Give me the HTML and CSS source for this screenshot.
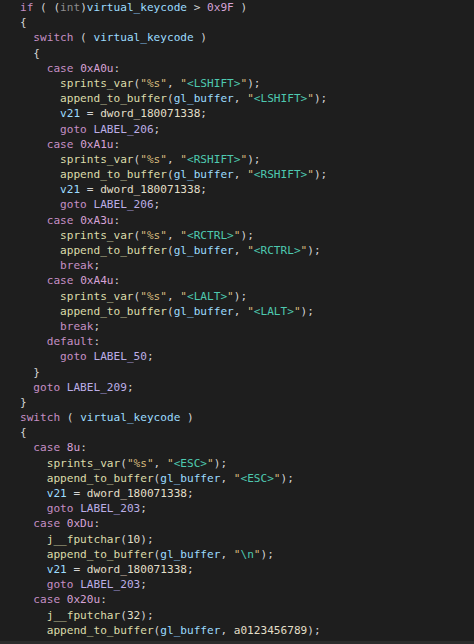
FILE: index.html
```html
<!DOCTYPE html>
<html>
<head>
<meta charset="utf-8">
<link rel="stylesheet" href="styles.css">
</head>
<body>
<div class="code">
<div class="ln"><span class="k">if</span> ( (<span class="t">int</span>)<span class="v">virtual_keycode</span> &gt; <span class="n">0x9F</span> )</div>
<div class="ln">{</div>
<div class="ln">  <span class="k">switch</span> ( <span class="v">virtual_keycode</span> )</div>
<div class="ln">  {</div>
<div class="ln">    <span class="k">case</span> <span class="n">0xA0u</span>:</div>
<div class="ln">      <span class="f">sprints_var</span>(<span class="s">"%s"</span>, <span class="s">"</span><span class="e">&lt;LSHIFT&gt;</span><span class="s">"</span>);</div>
<div class="ln">      <span class="f">append_to_buffer</span>(<span class="v">gl_buffer</span>, <span class="s">"</span><span class="e">&lt;LSHIFT&gt;</span><span class="s">"</span>);</div>
<div class="ln">      <span class="v">v21</span> = <span class="g">dword_180071338</span>;</div>
<div class="ln">      <span class="k">goto</span> <span class="l">LABEL_206</span>;</div>
<div class="ln">    <span class="k">case</span> <span class="n">0xA1u</span>:</div>
<div class="ln">      <span class="f">sprints_var</span>(<span class="s">"%s"</span>, <span class="s">"</span><span class="e">&lt;RSHIFT&gt;</span><span class="s">"</span>);</div>
<div class="ln">      <span class="f">append_to_buffer</span>(<span class="v">gl_buffer</span>, <span class="s">"</span><span class="e">&lt;RSHIFT&gt;</span><span class="s">"</span>);</div>
<div class="ln">      <span class="v">v21</span> = <span class="g">dword_180071338</span>;</div>
<div class="ln">      <span class="k">goto</span> <span class="l">LABEL_206</span>;</div>
<div class="ln">    <span class="k">case</span> <span class="n">0xA3u</span>:</div>
<div class="ln">      <span class="f">sprints_var</span>(<span class="s">"%s"</span>, <span class="s">"</span><span class="e">&lt;RCTRL&gt;</span><span class="s">"</span>);</div>
<div class="ln">      <span class="f">append_to_buffer</span>(<span class="v">gl_buffer</span>, <span class="s">"</span><span class="e">&lt;RCTRL&gt;</span><span class="s">"</span>);</div>
<div class="ln">      <span class="k">break</span>;</div>
<div class="ln">    <span class="k">case</span> <span class="n">0xA4u</span>:</div>
<div class="ln">      <span class="f">sprints_var</span>(<span class="s">"%s"</span>, <span class="s">"</span><span class="e">&lt;LALT&gt;</span><span class="s">"</span>);</div>
<div class="ln">      <span class="f">append_to_buffer</span>(<span class="v">gl_buffer</span>, <span class="s">"</span><span class="e">&lt;LALT&gt;</span><span class="s">"</span>);</div>
<div class="ln">      <span class="k">break</span>;</div>
<div class="ln">    <span class="k">default</span>:</div>
<div class="ln">      <span class="k">goto</span> <span class="l">LABEL_50</span>;</div>
<div class="ln">  }</div>
<div class="ln">  <span class="k">goto</span> <span class="l">LABEL_209</span>;</div>
<div class="ln">}</div>
<div class="ln"><span class="k">switch</span> ( <span class="v">virtual_keycode</span> )</div>
<div class="ln">{</div>
<div class="ln">  <span class="k">case</span> <span class="n">8u</span>:</div>
<div class="ln">    <span class="f">sprints_var</span>(<span class="s">"%s"</span>, <span class="s">"</span><span class="e">&lt;ESC&gt;</span><span class="s">"</span>);</div>
<div class="ln">    <span class="f">append_to_buffer</span>(<span class="v">gl_buffer</span>, <span class="s">"</span><span class="e">&lt;ESC&gt;</span><span class="s">"</span>);</div>
<div class="ln">    <span class="v">v21</span> = <span class="g">dword_180071338</span>;</div>
<div class="ln">    <span class="k">goto</span> <span class="l">LABEL_203</span>;</div>
<div class="ln">  <span class="k">case</span> <span class="n">0xDu</span>:</div>
<div class="ln">    <span class="f">j__fputchar</span>(<span class="g">10</span>);</div>
<div class="ln">    <span class="f">append_to_buffer</span>(<span class="v">gl_buffer</span>, <span class="s">"</span><span class="e">\n</span><span class="s">"</span>);</div>
<div class="ln">    <span class="v">v21</span> = <span class="g">dword_180071338</span>;</div>
<div class="ln">    <span class="k">goto</span> <span class="l">LABEL_203</span>;</div>
<div class="ln">  <span class="k">case</span> <span class="n">0x20u</span>:</div>
<div class="ln">    <span class="f">j__fputchar</span>(<span class="g">32</span>);</div>
<div class="ln">    <span class="f">append_to_buffer</span>(<span class="v">gl_buffer</span>, <span class="g">a0123456789</span>);</div>
</div>
<div class="hscroll"></div>
</body>
</html>
```
FILE: styles.css
```css
html, body {
  margin: 0;
  padding: 0;
  background: #1e1e1e;
  height: 100%;
  overflow: hidden;
}
body {
  display: flex;
  flex-direction: column;
}
.code {
  flex: 1;
  padding: 0 0 0 20px;
  font-family: "DejaVu Sans Mono", "Liberation Mono", monospace;
  font-size: 11.1px;
  line-height: 15.2px;
  color: #d4d4d4;
}
.ln {
  white-space: pre;
  height: 15.2px;
}
.hscroll {
  height: 3px;
  background: #2b2b2b;
}
.k { color: #c58fc4; }
.n { color: #d6a2d6; }
.v { color: #9cdcfe; }
.f { color: #dcdcaa; }
.s { color: #d7ba7d; }
.e { color: #4ec9b0; }
.l { color: #bcaee6; }
.g { color: #e2dfc8; }
.t { color: #8c8c8c; }
```
